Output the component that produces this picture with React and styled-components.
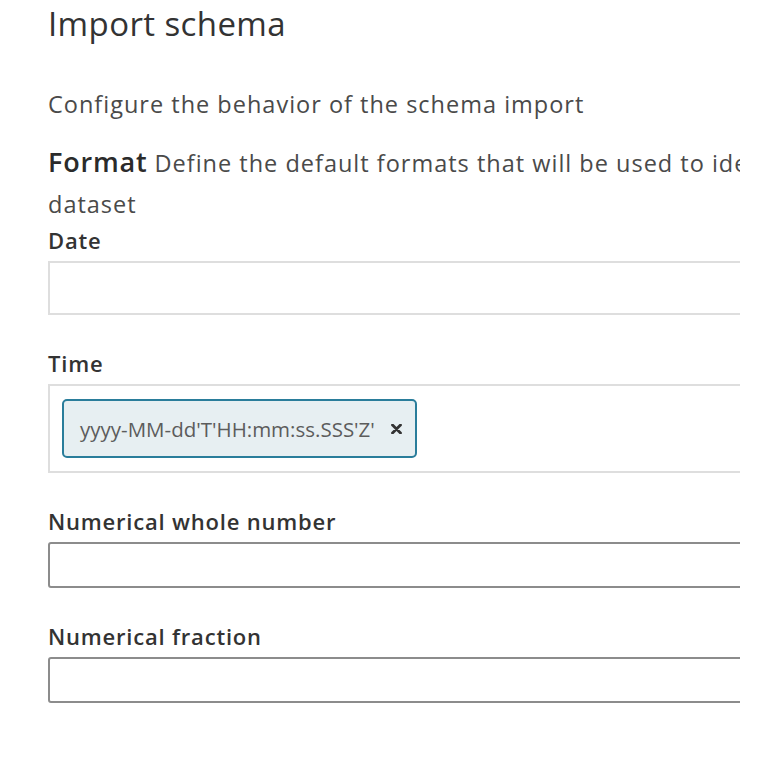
import React from "react";
import styled, { createGlobalStyle } from "styled-components";

const GlobalStyle = createGlobalStyle`
  body {
    margin: 0;
    background: #fff;
    font-family: "Open Sans", "Noto Sans", sans-serif;
    color: #444;
  }
`;

// the dialog is cut off on the right, content keeps going under it
const Panel = styled.div`
  width: 740px;
  overflow: hidden;
  padding: 4px 0 60px 0;
`;

const Inner = styled.div`
  width: 1000px;
  padding-left: 48px;
`;

const Title = styled.h1`
  margin: 0;
  font-size: 33px;
  line-height: 40px;
  font-weight: 400;
  letter-spacing: 0.4px;
  color: #333;
`;

const Intro = styled.p`
  margin: 45px 0 0 0;
  font-size: 23.5px;
  line-height: 30px;
  letter-spacing: 1px;
  color: #4a4a4a;
`;

const Section = styled.p`
  margin: 22px 0 0 0;
  font-size: 23.5px;
  line-height: 41px;
  letter-spacing: 1px;
  color: #4a4a4a;
`;

const SectionName = styled.span`
  font-size: 27px;
  font-weight: 600;
  letter-spacing: 0.8px;
  color: #2b2b2b;
`;

const Field = styled.div`
  display: flex;
  flex-direction: column;
  gap: 7px;
  margin-top: ${({ first }) => (first ? "1px" : "34px")};
`;

const Label = styled.label`
  font-size: 22px;
  line-height: 28px;
  font-weight: 600;
  letter-spacing: 0.8px;
  color: #333;
`;

const TagBox = styled.div`
  box-sizing: border-box;
  min-height: 54px;
  border: 2px solid #dedede;
  padding: 13px 12px;
  display: flex;
  flex-wrap: wrap;
  gap: 8px;
`;

const Tag = styled.div`
  box-sizing: border-box;
  height: 59px;
  width: 355px;
  display: flex;
  align-items: center;
  padding-left: 16px;
  border: 2px solid #2a7d9b;
  border-radius: 5px;
  background: #e7eff2;
  font-size: 20.5px;
  color: #5c5c5c;
`;

const TagText = styled.span`
  flex: 1;
  white-space: nowrap;
`;

const Remove = styled.span`
  margin-right: 13px;
  display: flex;
`;

const Input = styled.input`
  box-sizing: border-box;
  height: 46px;
  border: 2px solid #8c8c8c;
  border-radius: 3px;
  background: #fff;
  font: inherit;
  font-size: 18px;
  padding: 0 10px;
`;

const RemoveIcon = () => (
  <svg width="11" height="10" viewBox="0 0 11 10">
    <path
      d="M1.5 1 L9.5 9 M9.5 1 L1.5 9"
      stroke="#333"
      strokeWidth="2.8"
      strokeLinecap="round"
    />
  </svg>
);

const App = () => {
  return (
    <>
      <GlobalStyle />
      <Panel>
        <Inner>
          <Title>Import schema</Title>
          <Intro>Configure the behavior of the schema import</Intro>
          <Section>
            <SectionName>Format</SectionName> Define the default formats that
            will be used to identify types in the
            <br />
            dataset
          </Section>
          <Field first>
            <Label>Date</Label>
            <TagBox />
          </Field>
          <Field>
            <Label>Time</Label>
            <TagBox>
              <Tag>
                <TagText>yyyy-MM-dd'T'HH:mm:ss.SSS'Z'</TagText>
                <Remove>
                  <RemoveIcon />
                </Remove>
              </Tag>
            </TagBox>
          </Field>
          <Field>
            <Label>Numerical whole number</Label>
            <Input type="text" />
          </Field>
          <Field>
            <Label>Numerical fraction</Label>
            <Input type="text" />
          </Field>
        </Inner>
      </Panel>
    </>
  );
};

export default App;
